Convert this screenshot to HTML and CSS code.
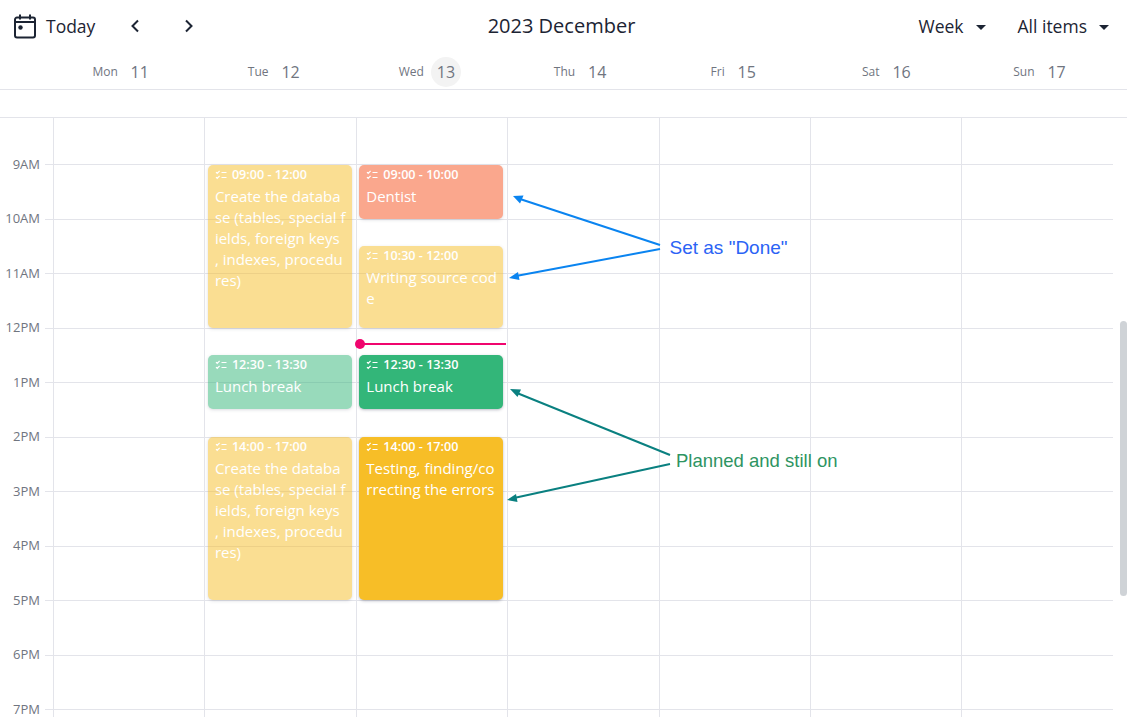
FILE: index.html
```html
<!DOCTYPE html>
<html lang="en">
<head>
<meta charset="utf-8">
<title>Calendar</title>
<link rel="stylesheet" href="styles.css">
</head>
<body>
<svg class="defs" width="0" height="0" aria-hidden="true">
  <symbol id="tick" viewBox="0 0 12 10">
    <path d="M1 2.200l1.200 1.200L4.600 .8M1 7.200l1.200 1.200L4.600 5.800M6.500 2.500h5M6.500 7.500h5" fill="none" stroke="currentColor" stroke-width="1.200"/>
  </symbol>
</svg>
<div class="app">
  <header class="toolbar">
    <div class="tool-left">
      <svg class="cal-icon" viewBox="0 0 24 26" width="24" height="26"><path d="M2 6.500a2 2 0 0 1 2-2h16a2 2 0 0 1 2 2v16a2 2 0 0 1-2 2H4a2 2 0 0 1-2-2zM2 9h20M7 1.500v5M17 1.500v5" fill="none" stroke="#1c2433" stroke-width="2"/><circle cx="7.500" cy="14.500" r="2.200" fill="#1c2433"/></svg>
      <span class="today">Today</span>
      <svg class="nav prev" viewBox="0 0 10 14" width="10" height="14"><path d="M8 1.500L2.500 7 8 12.500" fill="none" stroke="#1c2433" stroke-width="2"/></svg>
      <svg class="nav next" viewBox="0 0 10 14" width="10" height="14"><path d="M2 1.500L7.500 7 2 12.500" fill="none" stroke="#1c2433" stroke-width="2"/></svg>
    </div>
    <div class="title">2023 December</div>
    <div class="tool-right">
      <span class="drop week">Week<i class="caret"></i></span>
      <span class="drop items">All items<i class="caret"></i></span>
    </div>
  </header>

  <div class="days">
    <div class="day"><span class="dn">Mon</span><span class="num">11</span></div>
    <div class="day"><span class="dn">Tue</span><span class="num">12</span></div>
    <div class="day"><span class="dn">Wed</span><span class="num cur">13</span></div>
    <div class="day"><span class="dn">Thu</span><span class="num">14</span></div>
    <div class="day"><span class="dn">Fri</span><span class="num">15</span></div>
    <div class="day"><span class="dn">Sat</span><span class="num">16</span></div>
    <div class="day"><span class="dn">Sun</span><span class="num">17</span></div>
  </div>
  <div class="allday"></div>

  <div class="main">
    <div class="rows">
      <div class="row first"><span class="hr">9AM</span></div>
      <div class="row"><span class="hr">10AM</span></div>
      <div class="row"><span class="hr">11AM</span></div>
      <div class="row"><span class="hr">12PM</span></div>
      <div class="row"><span class="hr">1PM</span></div>
      <div class="row"><span class="hr">2PM</span></div>
      <div class="row"><span class="hr">3PM</span></div>
      <div class="row"><span class="hr">4PM</span></div>
      <div class="row"><span class="hr">5PM</span></div>
      <div class="row"><span class="hr">6PM</span></div>
      <div class="row"><span class="hr">7PM</span></div>
    </div>
    <div class="cols">
      <div class="col"></div>
      <div class="col">
        <div class="ev yellow done t9h3"><div class="time"><svg class="tick"><use href="#tick"/></svg>09:00 - 12:00</div><div class="name">Create the database (tables, special fields, foreign keys<br>, indexes, procedures)</div></div>
        <div class="ev green done t1230"><div class="time"><svg class="tick"><use href="#tick"/></svg>12:30 - 13:30</div><div class="name">Lunch break</div></div>
        <div class="ev yellow done t14"><div class="time"><svg class="tick"><use href="#tick"/></svg>14:00 - 17:00</div><div class="name">Create the database (tables, special fields, foreign keys<br>, indexes, procedures)</div></div>
      </div>
      <div class="col">
        <div class="ev red done t9h1"><div class="time"><svg class="tick"><use href="#tick"/></svg>09:00 - 10:00</div><div class="name">Dentist</div></div>
        <div class="ev yellow done t1030"><div class="time"><svg class="tick"><use href="#tick"/></svg>10:30 - 12:00</div><div class="name">Writing source cod<br>e</div></div>
        <div class="now"></div>
        <div class="ev green t1230"><div class="time"><svg class="tick"><use href="#tick"/></svg>12:30 - 13:30</div><div class="name">Lunch break</div></div>
        <div class="ev yellow t14"><div class="time"><svg class="tick"><use href="#tick"/></svg>14:00 - 17:00</div><div class="name">Testing, finding/correcting the errors</div></div>
      </div>
      <div class="col"></div>
      <div class="col"></div>
      <div class="col"></div>
      <div class="col"></div>
    </div>
  </div>
</div>

<div class="scrollbar"></div>

<svg class="arrows" width="1127" height="727" viewBox="0 0 1127 727" aria-hidden="true">
  <g stroke="#0a84f0" fill="#0a84f0" stroke-width="2">
    <path d="M660 245L520 199" fill="none"/>
    <path d="M660 249L516 276" fill="none"/>
    <path d="M513 196l10.500-.5-3.500 8z" stroke="none"/>
    <path d="M509 278l9-6 1.500 8z" stroke="none"/>
  </g>
  <g stroke="#0a8080" fill="#0a8080" stroke-width="2">
    <path d="M670 455L517 393" fill="none"/>
    <path d="M670 464L514 498" fill="none"/>
    <path d="M510 389l11 .5-3.500 7.500z" stroke="none"/>
    <path d="M507 500l9-6 1.500 8z" stroke="none"/>
  </g>
</svg>
<div class="note note-blue">Set as "Done"</div>
<div class="note note-green">Planned and still on</div>
</body>
</html>
```
FILE: styles.css
```css
* { box-sizing: border-box; }
html, body { margin: 0; height: 100%; }
body {
  position: relative;
  overflow: hidden;
  background: #fff;
  font-family: "Open Sans", "Noto Sans", sans-serif;
  color: #1c2433;
}
.defs { position: absolute; }

.app { display: flex; flex-direction: column; width: 1127px; height: 717px; }

.toolbar {
  flex: 0 0 52px;
  display: flex;
  align-items: center;
  justify-content: space-between;
  position: relative;
  padding: 0 18px 0 13px;
  font-size: 17.500px;
}
.tool-left { display: flex; align-items: center; }
.cal-icon { display: block; }
.today { margin-left: 9px; }
.nav { display: block; }
.prev { margin-left: 35px; }
.next { margin-left: 44px; }
.title {
  position: absolute;
  left: 0;
  right: 4px;
  margin-bottom: 2px;
  text-align: center;
  font-size: 20px;
  pointer-events: none;
}
.tool-right { display: flex; align-items: center; gap: 32px; }
.drop { display: flex; align-items: center; }
.caret {
  margin-left: 12px;
  margin-top: 2px;
  width: 0;
  height: 0;
  border-left: 5px solid transparent;
  border-right: 5px solid transparent;
  border-top: 5px solid #1c2433;
}

.days {
  flex: 0 0 38px;
  display: grid;
  grid-template-columns: repeat(7, 1fr);
  padding-left: 53px;
  padding-right: 2px;
  border-bottom: 1px solid #e3e4ea;
  align-items: center;
}
.day {
  display: flex;
  align-items: center;
  justify-content: center;
  gap: 7px;
  padding-top: 2px;
  padding-right: 12px;
  color: #70757f;
}
.dn { font-size: 12px; }
.num {
  width: 30px;
  height: 30px;
  border-radius: 50%;
  display: flex;
  align-items: center;
  justify-content: center;
  font-size: 16px;
}
.cur { background: #f3f3f3; }

.allday { flex: 0 0 28px; border-bottom: 1px solid #e3e4ea; }

.main { position: relative; flex: 1; width: 1113px; overflow: hidden; }
.rows { display: flex; flex-direction: column; }
.row {
  flex: 0 0 54.500px;
  height: 54.500px;
  position: relative;
  margin-left: 45px;
  border-bottom: 1px solid #e3e4ea;
}
.row.first { flex-basis: 47px; height: 47px; }
.hr {
  position: absolute;
  right: calc(100% + 5px);
  bottom: -6.500px;
  line-height: 14px;
  font-size: 13px;
  color: #70757f;
  white-space: nowrap;
}

.cols {
  position: absolute;
  inset: 0 0 0 53px;
  display: grid;
  grid-template-columns: repeat(7, 151.410px);
}
.col { position: relative; border-left: 1px solid #e3e4ea; }

.ev {
  position: absolute;
  left: 2.500px;
  width: 144px;
  border-radius: 5px;
  padding: 2px 5px 2px 7px;
  color: #fff;
  box-shadow: 0 1px 3px rgba(60, 64, 90, .35);
  overflow: hidden;
}
.ev.done { opacity: .5; }
.yellow { background: #f7be27; }
.green { background: #33b679; }
.red { background: #f7511e; }
.t9h3 { top: 47px; height: 163px; }
.t9h1 { top: 47px; height: 54px; }
.t1030 { top: 128px; height: 82px; }
.t1230 { top: 237px; height: 54px; }
.t14 { top: 319px; height: 163px; }

.time {
  display: flex;
  align-items: center;
  font-size: 12.600px;
  font-weight: 600;
  line-height: 15px;
}
.tick { width: 12px; height: 10px; margin-right: 5px; }
.name {
  margin-top: 4px;
  font-size: 15px;
  line-height: 21px;
  word-break: break-all;
}
.now {
  position: absolute;
  top: 224.500px;
  left: 2px;
  width: 147px;
  height: 2px;
  background: #f0056e;
}
.now::before {
  content: "";
  position: absolute;
  left: -4px;
  top: -4px;
  width: 10px;
  height: 10px;
  border-radius: 50%;
  background: #f0056e;
}

.scrollbar {
  position: absolute;
  left: 1120px;
  top: 321px;
  width: 7px;
  height: 275px;
  border-radius: 4px;
  background: #cfd3d7;
}
.arrows { position: absolute; left: 0; top: 0; pointer-events: none; }
.note {
  position: absolute;
  font-family: "Liberation Sans", Arial, sans-serif;
  line-height: 20px;
  white-space: nowrap;
}
.note-blue { left: 669.500px; top: 238px; color: #2b63f5; font-size: 19px; }
.note-green { left: 676px; top: 451px; color: #2e9462; font-size: 18.500px; }
```
